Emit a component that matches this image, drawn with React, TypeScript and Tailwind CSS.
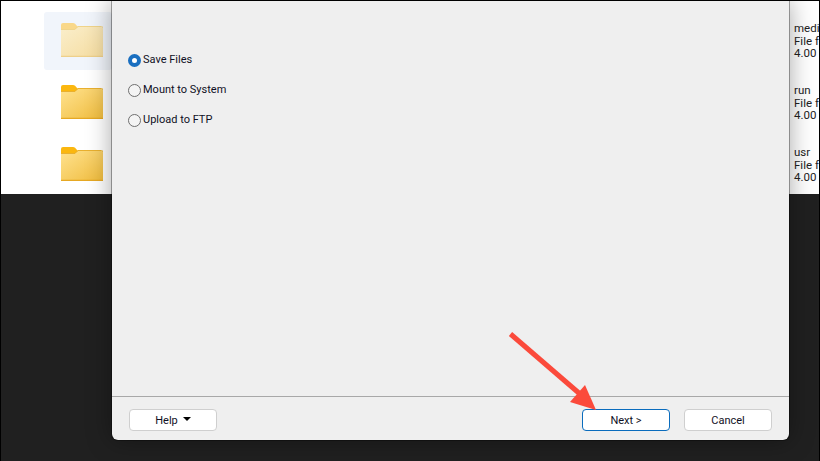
function Folder({ faded = false }: { faded?: boolean }) {
  const id = faded ? "f1" : "f2";
  return (
    <svg width="42" height="34" viewBox="0 0 42 34" className="block">
      <defs>
        <linearGradient id={id} x1="0" y1="0" x2="1" y2="1">
          <stop offset="0" stopColor={faded ? "#faeecb" : "#ffe28f"} />
          <stop offset="1" stopColor={faded ? "#f5dc9f" : "#efbb3c"} />
        </linearGradient>
      </defs>
      <path d="M0 2a2 2 0 0 1 2-2h10a3 3 0 0 1 2 .8L17 4v6H0z" fill={faded ? "#f9d88a" : "#fbb70f"} />
      <path d="M0 7h13.500l3.500-3h23.500a1.500 1.500 0 0 1 1.500 1.500v27a1.500 1.500 0 0 1-1.500 1.500H1.500A1.500 1.500 0 0 1 0 32.500z" fill={`url(#${id})`} />
      <path d="M0 6.500h13.500l3.500-3h23.500a1.500 1.500 0 0 1 1.500 1.500" fill="none" stroke={faded ? "#f0d48a" : "#e9b02f"} strokeWidth="1" />
      <path d="M0 33.300h42" stroke={faded ? "#eed08a" : "#e6a823"} strokeWidth="1.200" />
    </svg>
  );
}

function FolderRow({ selected = false }: { selected?: boolean }) {
  return (
    <div className={`h-[58px] w-[68px] rounded-[3px] flex items-center ${selected ? "bg-[#f1f5fb]" : ""}`}>
      <div className="ml-[17px] mt-[-2px]">
        <Folder faded={selected} />
      </div>
    </div>
  );
}

function Info({ name }: { name: string }) {
  return (
    <div className="h-[38px] text-[11.500px] leading-[12.500px] text-[#222] whitespace-nowrap">
      <div>{name}</div>
      <div>File folder</div>
      <div>4.00 KB</div>
    </div>
  );
}

function Radio({ label, checked = false }: { label: string; checked?: boolean }) {
  return (
    <div className="flex items-center h-[14px] text-[11px] text-[#101024]">
      {checked ? (
        <span className="w-[13px] h-[13px] rounded-full border-[4px] border-[#1a6fc0] bg-white shrink-0" />
      ) : (
        <span className="w-[13px] h-[13px] rounded-full border border-[#6f6f6f] bg-[#f4f4f4] shrink-0" />
      )}
      <span className="ml-[2px] pt-[1px]">{label}</span>
    </div>
  );
}

function Btn({ children, primary = false }: { children: React.ReactNode; primary?: boolean }) {
  return (
    <button
      className={`w-[88px] h-[22px] pt-[2px] bg-white rounded-[4px] border flex items-center justify-center text-[11px] text-[#101024] ${
        primary ? "border-[#0a6cbd]" : "border-[#cfcfcf]"
      }`}
    >
      {children}
    </button>
  );
}

export default function App() {
  return (
    <div
      className="relative w-[820px] h-[461px] overflow-hidden bg-[#202020] border-l border-t border-r border-black"
      style={{ fontFamily: 'Roboto, "Liberation Sans", sans-serif' }}
    >
      <div className="h-[193px] bg-white flex overflow-hidden">
        <div className="ml-[43px] mt-[11px] flex flex-col gap-[4px]">
          <FolderRow selected />
          <FolderRow />
          <FolderRow />
        </div>
        <div className="ml-auto w-[30px] pt-[21px] pl-[5px] flex flex-col gap-[24px] overflow-hidden">
          <Info name="media" />
          <Info name="run" />
          <Info name="usr" />
        </div>
      </div>

      {/* dialog window */}
      <div className="absolute left-[110px] top-[-1px] w-[679px] h-[441px] bg-[#efefef] rounded-b-[7px] flex flex-col border-x border-b border-[#00000055] bg-clip-padding shadow-[0_0_24px_rgba(0,0,0,0.34)]">
        <div className="flex-1 pt-[53px] pl-[16px] flex flex-col gap-[16px]">
          <Radio label="Save Files" checked />
          <Radio label="Mount to System" />
          <Radio label="Upload to FTP" />
        </div>
        <div className="h-[44px] border-t border-[#a8a8a8] flex items-start pt-[12px] pl-[17px] pr-[17px]">
          <Btn>
            <span>Help</span>
            <span className="ml-[5px] mt-[-4px] w-0 h-0 border-x-[4px] border-x-transparent border-t-[4px] border-t-black" />
          </Btn>
          <div className="ml-auto flex gap-[14px]">
            <Btn primary>Next &gt;</Btn>
            <Btn>Cancel</Btn>
          </div>
        </div>
      </div>

      {/* annotation arrow */}
      <svg className="absolute left-0 top-0 pointer-events-none" width="820" height="461" viewBox="1 1 820 461">
        <path d="M510.500 334L580 394" stroke="#fb4a3b" strokeWidth="5" strokeLinecap="butt" />
        <path d="M596 410L570 402L585 385z" fill="#fb4a3b" />
      </svg>
    </div>
  );
}
